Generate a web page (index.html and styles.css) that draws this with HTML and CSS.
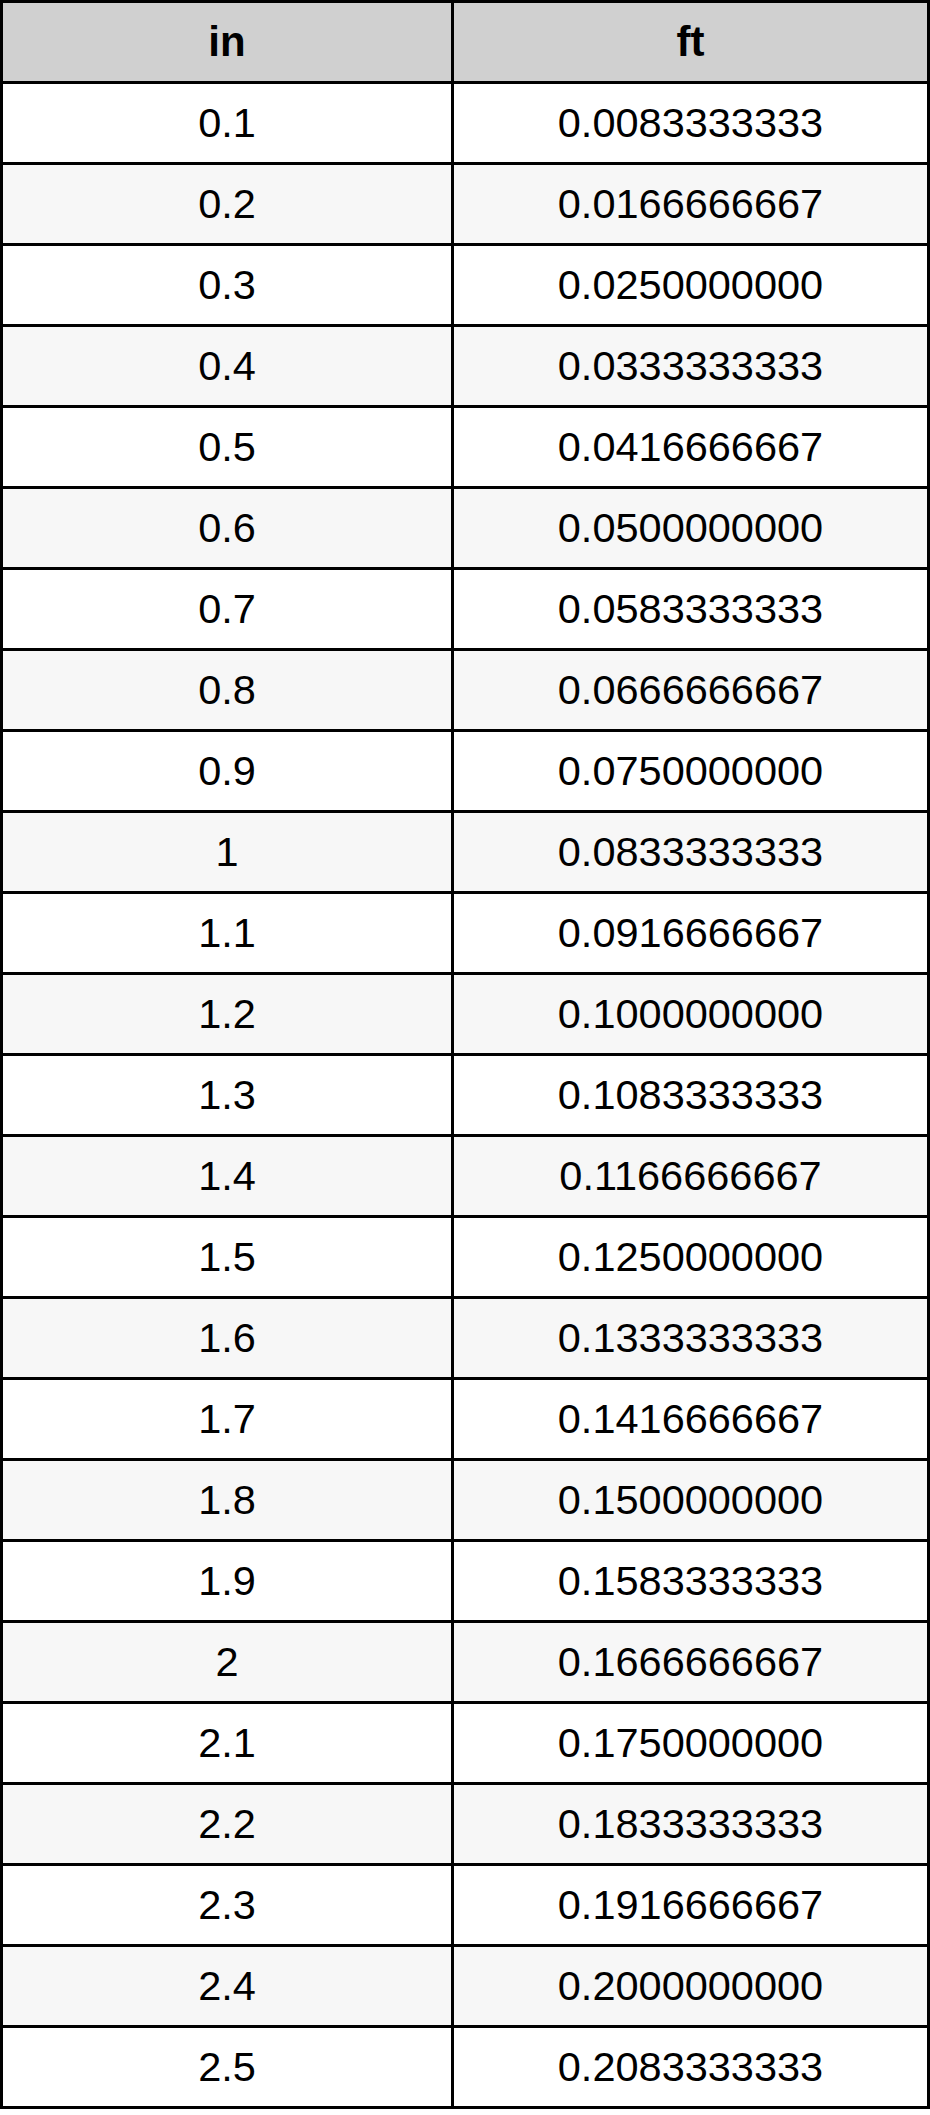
FILE: index.html
```html
<!DOCTYPE html>
<html>
<head>
<meta charset="utf-8">
<link rel="stylesheet" href="styles.css">
</head>
<body>
<table class="conv">
<thead>
<tr><th class="c1">in</th><th class="c2">ft</th></tr>
</thead>
<tbody>
<tr><td>0.1</td><td>0.0083333333</td></tr>
<tr><td>0.2</td><td>0.0166666667</td></tr>
<tr><td>0.3</td><td>0.0250000000</td></tr>
<tr><td>0.4</td><td>0.0333333333</td></tr>
<tr><td>0.5</td><td>0.0416666667</td></tr>
<tr><td>0.6</td><td>0.0500000000</td></tr>
<tr><td>0.7</td><td>0.0583333333</td></tr>
<tr><td>0.8</td><td>0.0666666667</td></tr>
<tr><td>0.9</td><td>0.0750000000</td></tr>
<tr><td>1</td><td>0.0833333333</td></tr>
<tr><td>1.1</td><td>0.0916666667</td></tr>
<tr><td>1.2</td><td>0.1000000000</td></tr>
<tr><td>1.3</td><td>0.1083333333</td></tr>
<tr><td>1.4</td><td>0.1166666667</td></tr>
<tr><td>1.5</td><td>0.1250000000</td></tr>
<tr><td>1.6</td><td>0.1333333333</td></tr>
<tr><td>1.7</td><td>0.1416666667</td></tr>
<tr><td>1.8</td><td>0.1500000000</td></tr>
<tr><td>1.9</td><td>0.1583333333</td></tr>
<tr><td>2</td><td>0.1666666667</td></tr>
<tr><td>2.1</td><td>0.1750000000</td></tr>
<tr><td>2.2</td><td>0.1833333333</td></tr>
<tr><td>2.3</td><td>0.1916666667</td></tr>
<tr><td>2.4</td><td>0.2000000000</td></tr>
<tr><td>2.5</td><td>0.2083333333</td></tr>
</tbody>
</table>
</body>
</html>
```
FILE: styles.css
```css
html, body {
  margin: 0;
  padding: 0;
  background: #ffffff;
}

.conv {
  border-collapse: collapse;
  width: 930px;
  table-layout: fixed;
  font-family: "Liberation Sans", Arial, sans-serif;
  color: #000000;
}

.conv th,
.conv td {
  border: 3px solid #000000;
  height: 78px;
  padding: 0;
  text-align: center;
  vertical-align: middle;
  line-height: 1;
}

.conv th {
  background: #d0d0d0;
  font-size: 42px;
  font-weight: bold;
}

.conv td {
  font-size: 41.5px;
  font-weight: normal;
}

.conv .c1 {
  width: 448px;
}

.conv tbody tr:nth-child(even) td {
  background: #f7f7f7;
}
```
